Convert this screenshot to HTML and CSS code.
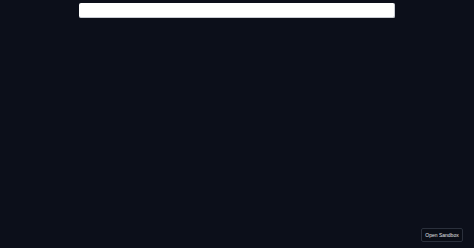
FILE: index.html
```html
<!DOCTYPE html>
<html lang="en">
<head>
<meta charset="utf-8">
<title>Sandbox</title>
<link rel="stylesheet" href="styles.css">
</head>
<body>
<main class="page">
  <input class="search" type="text" aria-label="Input">
</main>
<button class="open-sandbox" type="button">Open Sandbox</button>
</body>
</html>
```
FILE: styles.css
```css
html, body {
  margin: 0;
  padding: 0;
  height: 100%;
  background: #0c0f1a;
  font-family: "Liberation Sans", Arial, sans-serif;
}
.page {
  display: flex;
  justify-content: center;
  padding-top: 3px;
}
.search {
  box-sizing: border-box;
  width: 316px;
  height: 15px;
  margin: 0;
  padding: 0 4px;
  border: none;
  border-right: 1px solid #c9ccd3;
  border-bottom: 1px solid #c9ccd3;
  border-radius: 2px;
  background: #ffffff;
  outline: none;
}
.open-sandbox {
  position: fixed;
  right: 11px;
  bottom: 6px;
  box-sizing: border-box;
  width: 42px;
  height: 14px;
  padding: 0;
  border: 1px solid #2b303c;
  border-radius: 2px;
  background: #0a0d16;
  color: #e2e4e8;
  font-family: "Liberation Sans", Arial, sans-serif;
  font-size: 5px;
  line-height: 12px;
  cursor: pointer;
}
```
